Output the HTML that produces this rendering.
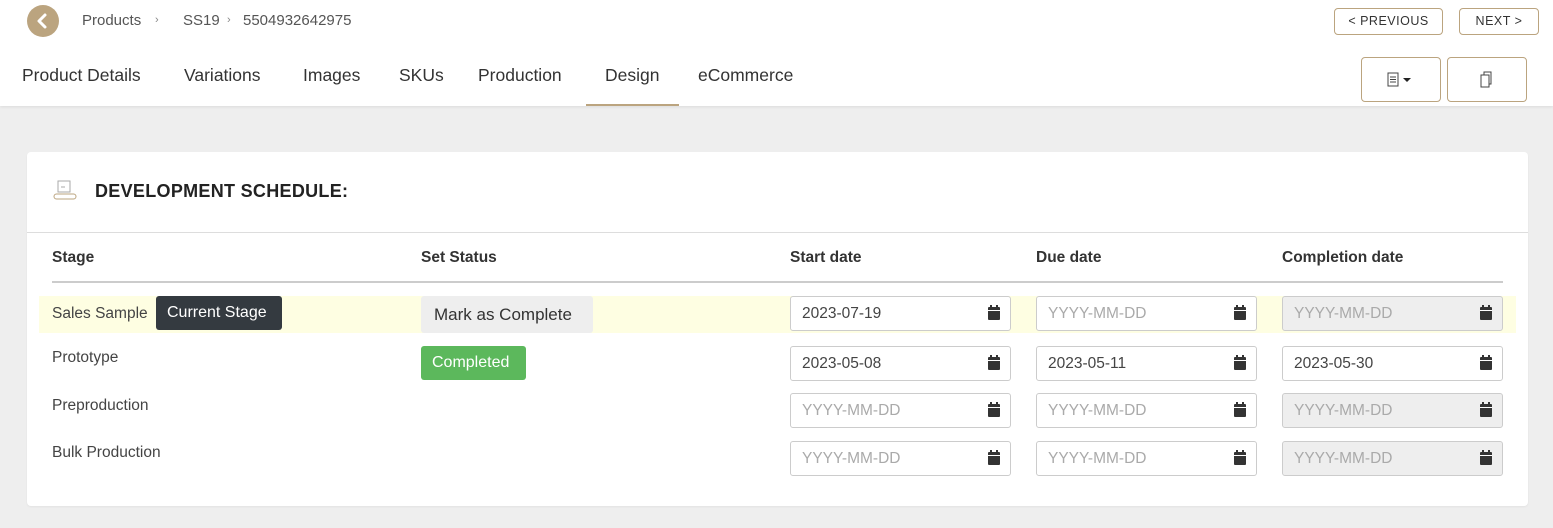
<!DOCTYPE html>
<html><head><style>
*{box-sizing:border-box;margin:0;padding:0}
body{width:1553px;height:528px;background:#eeeeee;font-family:"Liberation Sans",sans-serif;color:#333;position:relative;overflow:hidden}
.hdr{position:absolute;left:0;top:0;width:1553px;height:106px;background:#fff;box-shadow:0 1px 3px rgba(0,0,0,.08)}
.a{position:absolute;white-space:nowrap}
.back{left:27px;top:5px;width:32px;height:32px;border-radius:50%;background:#bba47f}
.bc{font-size:15px;color:#555;top:12px}
.tab{font-size:17.5px;color:#333;top:65px}
.btn{border:1px solid #bba47f;border-radius:4px;background:#fff;font-size:12.5px;letter-spacing:.5px;color:#333;text-align:center}
.card{left:27px;top:152px;width:1501px;height:354px;background:#fff;border-radius:4px;box-shadow:0 1px 2px rgba(0,0,0,.05)}
.th{font-size:15.5px;font-weight:bold;color:#333;top:249px}
.td{font-size:15.5px;color:#444}
.in{width:221px;height:35px;border:1px solid #ccc;border-radius:3px;background:#fff;font-size:15.5px;color:#444;padding:8px 0 0 11px}
.in.ph{color:#aaa}.in.dis{background:#eee}
.cal{position:absolute;right:10px;top:10px;width:12px;height:13px;background:#333;border-radius:1px}
.cal:before{content:"";position:absolute;left:2px;top:-2px;width:2px;height:3px;background:#333;box-shadow:6px 0 #333}
.cal:after{content:"";position:absolute;left:0;top:3px;width:12px;height:1px;background:#fff}
</style></head><body>
<div class="hdr"></div>
<div class="a back"><svg width="32" height="32"><path d="M18 10l-6 6 6 6" stroke="#fff" stroke-width="3" fill="none" stroke-linecap="round" stroke-linejoin="round"/></svg></div>
<div class="a bc" style="left:82px">Products</div>
<div class="a bc" style="left:155px;font-size:11px;top:14px;color:#888">›</div>
<div class="a bc" style="left:183px">SS19</div>
<div class="a bc" style="left:227px;font-size:11px;top:14px;color:#888">›</div>
<div class="a bc" style="left:243px">5504932642975</div>
<div class="a btn" style="left:1334px;top:8px;width:109px;height:27px;line-height:25px">&lt; PREVIOUS</div>
<div class="a btn" style="left:1459px;top:8px;width:80px;height:27px;line-height:25px">NEXT &gt;</div>
<div class="a btn" style="left:1361px;top:57px;width:80px;height:45px"><svg width="80" height="43"><rect x="26" y="15" width="10" height="13" fill="none" stroke="#444"/><path d="M28 19h6M28 21.5h6M28 24h6" stroke="#444"/><path d="M41 20h8l-4 4z" fill="#222"/></svg></div>
<div class="a btn" style="left:1447px;top:57px;width:80px;height:45px"><svg width="80" height="43"><rect x="33" y="17" width="8" height="12" fill="none" stroke="#444"/><path d="M36 17v-3h7v12h-2" fill="none" stroke="#444"/></svg></div>
<div class="a tab" style="left:22px">Product Details</div>
<div class="a tab" style="left:184px">Variations</div>
<div class="a tab" style="left:303px">Images</div>
<div class="a tab" style="left:399px">SKUs</div>
<div class="a tab" style="left:478px">Production</div>
<div class="a tab" style="left:605px">Design</div>
<div class="a" style="left:586px;top:104px;width:93px;height:2px;background:#bba47f"></div>
<div class="a tab" style="left:698px">eCommerce</div>

<div class="a card"></div>
<div class="a" style="left:53px;top:180px"><svg width="24" height="20"><rect x="5" y="1" width="12" height="11" fill="none" stroke="#aaa"/><path d="M8 7h4" stroke="#aaa"/><rect x="1" y="14" width="22" height="5" rx="2.5" fill="none" stroke="#bba47f"/></svg></div>
<div class="a" style="left:95px;top:181px;font-size:18px;font-weight:bold;color:#222;letter-spacing:.3px">DEVELOPMENT SCHEDULE:</div>
<div class="a" style="left:27px;top:232px;width:1501px;height:1px;background:#ddd"></div>
<div class="a th" style="left:52px">Stage</div>
<div class="a th" style="left:421px">Set Status</div>
<div class="a th" style="left:790px">Start date</div>
<div class="a th" style="left:1036px">Due date</div>
<div class="a th" style="left:1282px">Completion date</div>
<div class="a" style="left:52px;top:281px;width:1451px;height:2px;background:#ccc"></div>
<div class="a" style="left:39px;top:296px;width:1477px;height:37px;background:#fefee2"></div>

<div class="a td" style="left:52px;top:305px">Sales Sample</div>
<div class="a" style="left:156px;top:296px;width:126px;height:34px;background:#343a40;border-radius:3px;color:#fff;font-size:16px;padding:8px 0 0 11px">Current Stage</div>
<div class="a" style="left:421px;top:296px;width:172px;height:37px;background:#eee;border-radius:3px;color:#333;font-size:17px;padding:9px 0 0 13px">Mark as Complete</div>
<div class="a td" style="left:52px;top:349px">Prototype</div>
<div class="a" style="left:421px;top:346px;width:105px;height:34px;background:#5cb85c;border-radius:3px;color:#fff;font-size:16px;padding:8px 0 0 11px">Completed</div>
<div class="a td" style="left:52px;top:397px">Preproduction</div>
<div class="a td" style="left:52px;top:444px">Bulk Production</div>

<div class="a in" style="left:790px;top:296px">2023-07-19<i class="cal"></i></div>
<div class="a in ph" style="left:1036px;top:296px">YYYY-MM-DD<i class="cal"></i></div>
<div class="a in ph dis" style="left:1282px;top:296px">YYYY-MM-DD<i class="cal"></i></div>
<div class="a in" style="left:790px;top:346px">2023-05-08<i class="cal"></i></div>
<div class="a in" style="left:1036px;top:346px">2023-05-11<i class="cal"></i></div>
<div class="a in" style="left:1282px;top:346px">2023-05-30<i class="cal"></i></div>
<div class="a in ph" style="left:790px;top:393px">YYYY-MM-DD<i class="cal"></i></div>
<div class="a in ph" style="left:1036px;top:393px">YYYY-MM-DD<i class="cal"></i></div>
<div class="a in ph dis" style="left:1282px;top:393px">YYYY-MM-DD<i class="cal"></i></div>
<div class="a in ph" style="left:790px;top:441px">YYYY-MM-DD<i class="cal"></i></div>
<div class="a in ph" style="left:1036px;top:441px">YYYY-MM-DD<i class="cal"></i></div>
<div class="a in ph dis" style="left:1282px;top:441px">YYYY-MM-DD<i class="cal"></i></div>
</body></html>
